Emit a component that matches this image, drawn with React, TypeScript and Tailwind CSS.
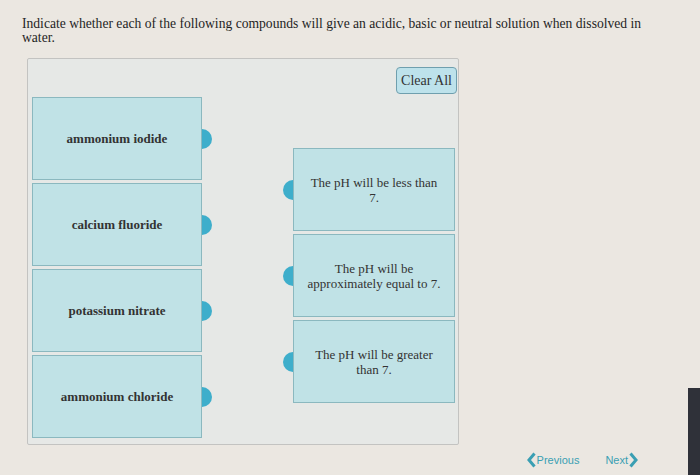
import React from "react";

const leftItems = ["ammonium iodide", "calcium fluoride", "potassium nitrate", "ammonium chloride"];
const rightItems = [
  ["The pH will be less than", "7."],
  ["The pH will be", "approximately equal to 7."],
  ["The pH will be greater", "than 7."],
];

export default function App() {
  return (
    <div
      className="relative w-[700px] h-[475px] overflow-hidden bg-[#ebe7e1] text-[#2a2a2a]"
      style={{ fontFamily: '"Liberation Serif", "Times New Roman", serif' }}
    >
      <div className="ml-[22px] pt-[17px] w-[632px] text-[13.6px] leading-[14px] text-[#1f1f1f]">
        Indicate whether each of the following compounds will give an acidic, basic or neutral solution when dissolved in water.
      </div>

      <div className="ml-[27px] mt-[13px] w-[432px] h-[387px] border border-[#c3c3c1] rounded-[2px] bg-[#e6e8e6] flex flex-col">
        <div className="flex justify-end pt-[8px] pr-[1px]">
          <button className="h-[27px] px-[4px] bg-[#bde2eb] border border-[#6f9fae] rounded-[4px] text-[14px] text-[#333] leading-none">
            Clear All
          </button>
        </div>
        <div className="flex mt-[3px]">
          <div className="flex flex-col gap-[3px] ml-[4px]">
            {leftItems.map((t) => (
              <div key={t} className="flex items-center">
                <div className="w-[170px] h-[83px] bg-[#c0e2e6] border border-[#8bb8bf] flex items-center justify-center text-[13px] font-bold text-[#333]">
                  {t}
                </div>
                <div className="w-[10px] h-[20px] rounded-r-full bg-[#3eaecb]" />
              </div>
            ))}
          </div>
          <div className="flex flex-col gap-[3px] ml-[71px] mt-[51px]">
            {rightItems.map((lines, i) => (
              <div key={i} className="flex items-center">
                <div className="w-[10px] h-[20px] rounded-l-full bg-[#3eaecb]" />
                <div className="w-[162px] h-[83px] bg-[#c0e2e6] border border-[#8bb8bf] flex flex-col items-center justify-center text-[13px] leading-[15px] text-[#333] text-center">
                  <span>{lines[0]}</span>
                  <span>{lines[1]}</span>
                </div>
              </div>
            ))}
          </div>
        </div>
      </div>

      <div
        className="flex justify-end items-center gap-[26px] pr-[62px] mt-[7px] text-[11px] text-[#3a9fb3]"
        style={{ fontFamily: '"Liberation Sans", Arial, sans-serif' }}
      >
        <div className="flex items-center gap-[1px]">
          <svg width="9" height="16" viewBox="0 0 9 16">
            <path d="M7.5 1.5 L2 8 L7.5 14.5" fill="none" stroke="#3a9fb3" strokeWidth="3" strokeLinejoin="miter" />
          </svg>
          <span>Previous</span>
        </div>
        <div className="flex items-center gap-[1px]">
          <span>Next</span>
          <svg width="9" height="16" viewBox="0 0 9 16">
            <path d="M1.5 1.5 L7 8 L1.5 14.5" fill="none" stroke="#3a9fb3" strokeWidth="3" strokeLinejoin="miter" />
          </svg>
        </div>
      </div>

      <div className="absolute right-0 top-[388px] w-[12px] h-[87px] bg-[#2f3139]" />
    </div>
  );
}
